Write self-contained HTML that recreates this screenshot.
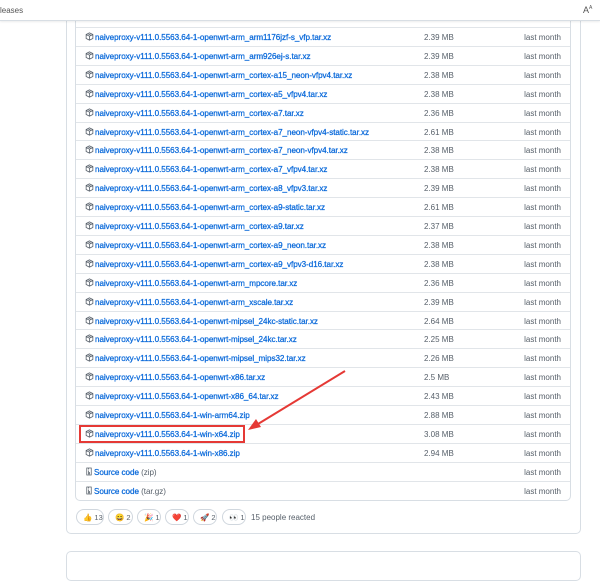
<!DOCTYPE html>
<html><head><style>
*{margin:0;padding:0;box-sizing:border-box}
body{width:600px;height:563px;background:#fff;position:relative;overflow:hidden;font-family:"Liberation Sans",sans-serif}
.top{position:absolute;left:0;top:0;width:600px;height:21px;background:#fff;border-bottom:1px solid #d8dee4;box-shadow:0 1px 2px rgba(0,0,0,.08);z-index:5;font-size:8px;color:#555}
.outer{position:absolute;left:66px;top:-10px;width:515px;height:544px;border:1px solid #d8dee4;border-radius:5px}
.inner{position:absolute;left:75px;top:-10px;width:496px;height:511px;border:1px solid #d8dee4;border-radius:5px}
.row{position:absolute;left:76px;width:494px;height:19px;border-top:1px solid #e1e5e9;font-size:8.1px}
.row .n{position:absolute;left:9px;top:4px;color:#0969da;white-space:nowrap;letter-spacing:-0.05px;-webkit-text-stroke:0.25px #0969da}
.row .n svg{vertical-align:-1px;margin-right:1px}
.row .s{position:absolute;left:348px;top:5px;color:#57606a;font-size:8px}
.row .d{position:absolute;right:9px;top:5px;color:#57606a;font-size:8px}
.n .g{color:#57606a;-webkit-text-stroke:0}
.re{position:absolute;top:509px;height:16px;border:1px solid #d0d7de;border-radius:9px;font-size:7.5px;color:#57606a;padding:3px 0 0 6px}
.card2{position:absolute;left:66px;top:551px;width:515px;height:30px;border:1px solid #d8dee4;border-radius:5px}
</style></head><body>
<div class="top"><span style="position:absolute;left:0;top:6px">leases</span><span style="position:absolute;left:583px;top:5px;font-size:9px">A<sup style="font-size:5px">A</sup></span></div>
<div class="outer"></div>
<div class="inner"></div>
<div id="rows"></div>
<script>
var names=["openwrt-arm_arm1176jzf-s_vfp.tar.xz","2.39 MB","openwrt-arm_arm926ej-s.tar.xz","2.39 MB","openwrt-arm_cortex-a15_neon-vfpv4.tar.xz","2.38 MB","openwrt-arm_cortex-a5_vfpv4.tar.xz","2.38 MB","openwrt-arm_cortex-a7.tar.xz","2.36 MB","openwrt-arm_cortex-a7_neon-vfpv4-static.tar.xz","2.61 MB","openwrt-arm_cortex-a7_neon-vfpv4.tar.xz","2.38 MB","openwrt-arm_cortex-a7_vfpv4.tar.xz","2.38 MB","openwrt-arm_cortex-a8_vfpv3.tar.xz","2.39 MB","openwrt-arm_cortex-a9-static.tar.xz","2.61 MB","openwrt-arm_cortex-a9.tar.xz","2.37 MB","openwrt-arm_cortex-a9_neon.tar.xz","2.38 MB","openwrt-arm_cortex-a9_vfpv3-d16.tar.xz","2.38 MB","openwrt-arm_mpcore.tar.xz","2.36 MB","openwrt-arm_xscale.tar.xz","2.39 MB","openwrt-mipsel_24kc-static.tar.xz","2.64 MB","openwrt-mipsel_24kc.tar.xz","2.25 MB","openwrt-mipsel_mips32.tar.xz","2.26 MB","openwrt-x86.tar.xz","2.5 MB","openwrt-x86_64.tar.xz","2.43 MB","win-arm64.zip","2.88 MB","win-x64.zip","3.08 MB","win-x86.zip","2.94 MB"];
var pk='<svg width="9" height="9" viewBox="0 0 16 16"><path fill="none" stroke="#57606a" stroke-width="1.4" d="M8 1.5l6 3v7l-6 3-6-3v-7zM2 4.5l6 3 6-3M8 7.5v7M5 3l6 3"/></svg>';
var zp='<svg width="8" height="9" viewBox="0 0 16 16"><path fill="none" stroke="#57606a" stroke-width="1.5" d="M3.5 1h9v14h-9zM7 1v2M7 4v2M7 7v2M7 10h2v3H7z"/></svg>';
var h='';var y0=8;
h+='<div class="row" style="top:'+(y0)+'px;border-top:none"></div>';
for(var i=0;i<names.length/2;i++){var t=y0+19+i*18.9;
h+='<div class="row" style="top:'+t.toFixed(1)+'px"><span class="n">'+pk+'naiveproxy-v111.0.5563.64-1-'+names[2*i]+'</span><span class="s">'+names[2*i+1]+'</span><span class="d">last month</span></div>';}
var t=y0+19+23*18.9;
h+='<div class="row" style="top:'+t.toFixed(1)+'px"><span class="n">'+zp+'Source code <span class="g">(zip)</span></span><span class="d">last month</span></div>';
t+=18.9;
h+='<div class="row" style="top:'+t.toFixed(1)+'px"><span class="n">'+zp+'Source code <span class="g">(tar.gz)</span></span><span class="d">last month</span></div>';
document.getElementById('rows').innerHTML=h;
</script>
<div style="position:absolute;left:79px;top:425px;width:166px;height:18px;border:2px solid #e53935"></div>
<svg style="position:absolute;left:0;top:0" width="600" height="563"><line x1="345" y1="371" x2="258" y2="424" stroke="#e53935" stroke-width="2"/><path d="M248 430l8-11 5 8z" fill="#e53935"/></svg>
<div class="re" style="left:76px;width:28px">👍 13</div>
<div class="re" style="left:108px;width:25px">😄 2</div>
<div class="re" style="left:137px;width:24px">🎉 1</div>
<div class="re" style="left:165px;width:24px">❤️ 1</div>
<div class="re" style="left:193px;width:24px">🚀 2</div>
<div class="re" style="left:222px;width:24px">👀 1</div>
<div style="position:absolute;left:251px;top:513px;font-size:8px;color:#57606a">15 people reacted</div>
<div class="card2"></div>
</body></html>
